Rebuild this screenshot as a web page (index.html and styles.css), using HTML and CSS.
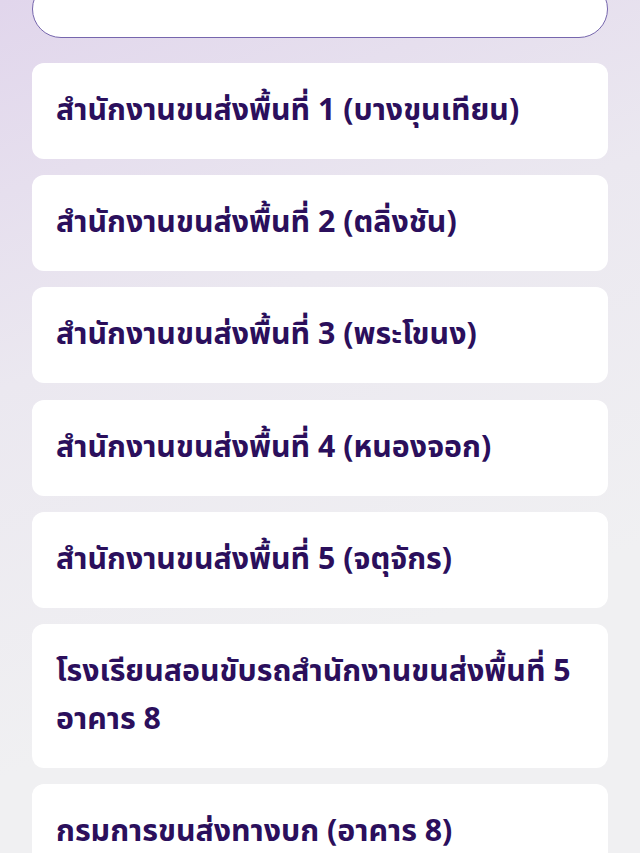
FILE: index.html
```html
<!DOCTYPE html>
<html lang="th">

<head>
    <meta charset="UTF-8" />
    <meta name="viewport" content="width=device-width, initial-scale=1" />
    <title>สำนักงานขนส่ง</title>
    <link rel="stylesheet" href="styles.css">
</head>

<body>
    <div class="page">
        <div class="search-box"></div>

        <ul class="office-list">
            <li class="office-card">สำนักงานขนส่งพื้นที่ 1 (บางขุนเทียน)</li>
            <li class="office-card">สำนักงานขนส่งพื้นที่ 2 (ตลิ่งชัน)</li>
            <li class="office-card">สำนักงานขนส่งพื้นที่ 3 (พระโขนง)</li>
            <li class="office-card">สำนักงานขนส่งพื้นที่ 4 (หนองจอก)</li>
            <li class="office-card">สำนักงานขนส่งพื้นที่ 5 (จตุจักร)</li>
            <li class="office-card">โรงเรียนสอนขับรถสำนักงานขนส่งพื้นที่ 5 อาคาร 8</li>
            <li class="office-card">กรมการขนส่งทางบก (อาคาร 8)</li>
        </ul>
    </div>
</body>

</html>
```

FILE: styles.css
```css
body {
    margin: 0;
    font-family: "Noto Sans Thai", "Noto Sans", sans-serif;
    background: linear-gradient(160deg, #e1d6ec 0%, #ebe8f0 35%, #f0f0f2 70%);
    min-height: 100vh;
    color: #2b0f5c;
}

.page {
    padding: 0 32px;
}

.search-box {
    height: 56px;
    margin-top: -20px;
    background-color: #fff;
    border: 1px solid #7666ad;
    border-radius: 30px;
}

.office-list {
    list-style: none;
    margin: 25px 0 0;
    padding: 0;
    display: flex;
    flex-direction: column;
    gap: 16.2px;
}

.office-card {
    background-color: #fff;
    border-radius: 12px;
    padding: 24px;
    font-size: 30.3px;
    font-weight: 700;
    line-height: 48px;
}
```
